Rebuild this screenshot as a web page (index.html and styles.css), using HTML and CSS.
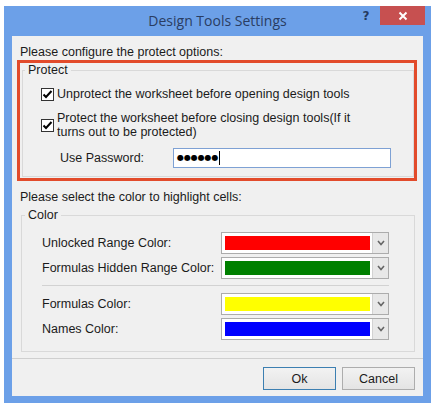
FILE: index.html
```html
<!DOCTYPE html>
<html>
<head>
<meta charset="utf-8">
<link rel="stylesheet" href="styles.css">
</head>
<body>
<div class="window">
  <div class="titlebar">
    <span class="title">Design Tools Settings</span>
    <div class="title-buttons">
      <span class="help">?</span>
      <span class="close"><svg width="10" height="10" viewBox="0 0 10 10"><path d="M1.5 1.5 L8.5 8.5 M8.5 1.5 L1.5 8.5" stroke="#fff" stroke-width="2" fill="none"/></svg></span>
    </div>
  </div>
  <div class="client">
    <p class="intro">Please configure the protect options:</p>
    <div class="highlight">
      <fieldset class="group protect">
        <legend>Protect</legend>
        <div class="protect-body">
          <div class="check-row">
            <span class="box"><svg width="11" height="11" viewBox="0 0 11 11"><path d="M1.5 5.5 L4 8 L9.5 2" stroke="#000" stroke-width="2" fill="none"/></svg></span>
            <span>Unprotect the worksheet before opening design tools</span>
          </div>
          <div class="check-row">
            <span class="box"><svg width="11" height="11" viewBox="0 0 11 11"><path d="M1.5 5.5 L4 8 L9.5 2" stroke="#000" stroke-width="2" fill="none"/></svg></span>
            <span>Protect the worksheet before closing design tools(If it<br>turns out to be protected)</span>
          </div>
          <div class="pass-row">
            <span class="pass-label">Use Password:</span>
            <div class="pass-input"><span class="dots">●●●●●●</span><span class="caret"></span></div>
          </div>
        </div>
      </fieldset>
    </div>
    <p class="intro intro2">Please select the color to highlight cells:</p>
    <fieldset class="group colors">
      <legend>Color</legend>
      <div class="color-body">
        <div class="color-row">
          <span class="color-label">Unlocked Range Color:</span>
          <div class="combo"><span class="swatch red"></span><span class="drop"><svg width="8" height="6" viewBox="0 0 8 6"><path d="M1 1 L4 4.5 L7 1" stroke="#666" stroke-width="1.6" fill="none"/></svg></span></div>
        </div>
        <div class="color-row">
          <span class="color-label">Formulas Hidden Range Color:</span>
          <div class="combo"><span class="swatch green"></span><span class="drop"><svg width="8" height="6" viewBox="0 0 8 6"><path d="M1 1 L4 4.5 L7 1" stroke="#666" stroke-width="1.6" fill="none"/></svg></span></div>
        </div>
        <div class="sep"></div>
        <div class="color-row">
          <span class="color-label">Formulas Color:</span>
          <div class="combo"><span class="swatch yellow"></span><span class="drop"><svg width="8" height="6" viewBox="0 0 8 6"><path d="M1 1 L4 4.5 L7 1" stroke="#666" stroke-width="1.6" fill="none"/></svg></span></div>
        </div>
        <div class="color-row">
          <span class="color-label">Names Color:</span>
          <div class="combo"><span class="swatch blue"></span><span class="drop"><svg width="8" height="6" viewBox="0 0 8 6"><path d="M1 1 L4 4.5 L7 1" stroke="#666" stroke-width="1.6" fill="none"/></svg></span></div>
        </div>
      </div>
    </fieldset>
    <div class="footer">
      <button class="btn default">Ok</button>
      <button class="btn">Cancel</button>
    </div>
  </div>
</div>
</body>
</html>
```
FILE: styles.css
```css
* { box-sizing: border-box; }
body {
  margin: 0;
  background: #fff;
  font-family: "Liberation Sans", Arial, sans-serif;
  font-size: 12.5px;
  color: #1b1b1b;
}
.window {
  margin: 6px 0 0 4px;
  width: 427px;
  height: 397px;
  background: #6ca0e8;
  padding: 0 8px 7px 8px;
  display: flex;
  flex-direction: column;
}
.titlebar {
  height: 30px;
  margin: 0 -8px;
  padding: 0 6px;
  display: grid;
  grid-template-columns: 1fr auto 1fr;
}
.title {
  grid-column: 2;
  font-family: "Open Sans", "Noto Sans", sans-serif;
  font-size: 14px;
  line-height: 30px;
  color: #2a3d62;
}
.title-buttons {
  grid-column: 3;
  justify-self: end;
  display: flex;
  align-items: flex-start;
}
.help {
  width: 28px;
  height: 19px;
  display: flex;
  align-items: center;
  justify-content: center;
  font-family: "DejaVu Sans", sans-serif;
  font-weight: bold;
  font-size: 12px;
  color: #253a5e;
  padding-top: 1px;
}
.close {
  width: 45px;
  height: 19px;
  background: #c75050;
  display: flex;
  align-items: center;
  justify-content: center;
}
.client {
  flex: 1;
  background: #f0f0f0;
  display: flex;
  flex-direction: column;
}
.intro {
  margin: 9px 0 0 8px;
  line-height: 14px;
}
.highlight {
  margin: 1px 0 0 5px;
  width: 400px;
  border: 3px solid #e24b2b;
  padding: 0 0 1px 2px;
}
.group {
  margin: 0;
  padding: 0;
  border: 1px solid #d9d9d9;
  min-width: 0;
}
.group legend {
  margin-left: 2px;
  padding: 0 3px;
  line-height: 14px;
}
.protect-body {
  padding: 10px 0 8px 18px;
}
.check-row {
  display: flex;
  align-items: center;
  gap: 3px;
  line-height: 14px;
}
.check-row + .check-row { margin-top: 10px; }
.box {
  width: 13px;
  height: 13px;
  border: 1px solid #333;
  background: #fff;
  display: flex;
  align-items: center;
  justify-content: center;
  flex-shrink: 0;
}
.pass-row {
  margin-top: 9px;
  display: flex;
  align-items: center;
}
.pass-label {
  padding-left: 19px;
  width: 132px;
}
.pass-input {
  width: 218px;
  height: 20px;
  border: 1px solid #7ea1d4;
  background: #fff;
  padding-left: 3px;
  display: flex;
  align-items: center;
}
.dots {
  font-family: "DejaVu Sans", sans-serif;
  font-size: 8px;
  letter-spacing: -0.1px;
  line-height: 14px;
  color: #000;
}
.caret {
  width: 1px;
  height: 14px;
  background: #000;
  margin-left: 1px;
}
.intro2 { margin-top: 9px; }
.colors {
  margin: 4px 0 0 9px;
  width: 394px;
}
.colors legend { margin-left: 3px; }
.color-body {
  padding: 10px 0 11px 20px;
}
.color-row {
  display: flex;
  align-items: center;
  height: 22px;
}
.color-row + .color-row { margin-top: 3px; }
.color-label { width: 179px; }
.combo {
  width: 168px;
  height: 22px;
  border: 1px solid #acacac;
  background: #fff;
  padding: 3px;
  display: flex;
}
.swatch { flex: 1; }
.red { background: #ff0000; }
.green { background: #008000; }
.yellow { background: #ffff00; }
.blue { background: #0000ff; }
.drop {
  width: 16px;
  margin: -3px -3px -3px 2px;
  background: #e8e8e8;
  border-left: 1px solid #d2d2d2;
  display: flex;
  align-items: center;
  justify-content: center;
}
.sep {
  margin: 6px 0 7px;
  width: 347px;
  height: 1px;
  background: #d2d2d2;
}
.footer {
  margin-top: 6px;
  border-top: 1px solid #cfcfcf;
  padding: 8px 8px 0 0;
  display: flex;
  justify-content: flex-end;
  gap: 6px;
}
.btn {
  width: 73px;
  height: 23px;
  border: 1px solid #adadad;
  background: linear-gradient(#f2f2f2, #e4e4e4);
  font-family: "Liberation Sans", Arial, sans-serif;
  font-size: 12.5px;
  color: #1b1b1b;
  padding: 0;
}
.btn.default { border-color: #3c7fb1; }
```
